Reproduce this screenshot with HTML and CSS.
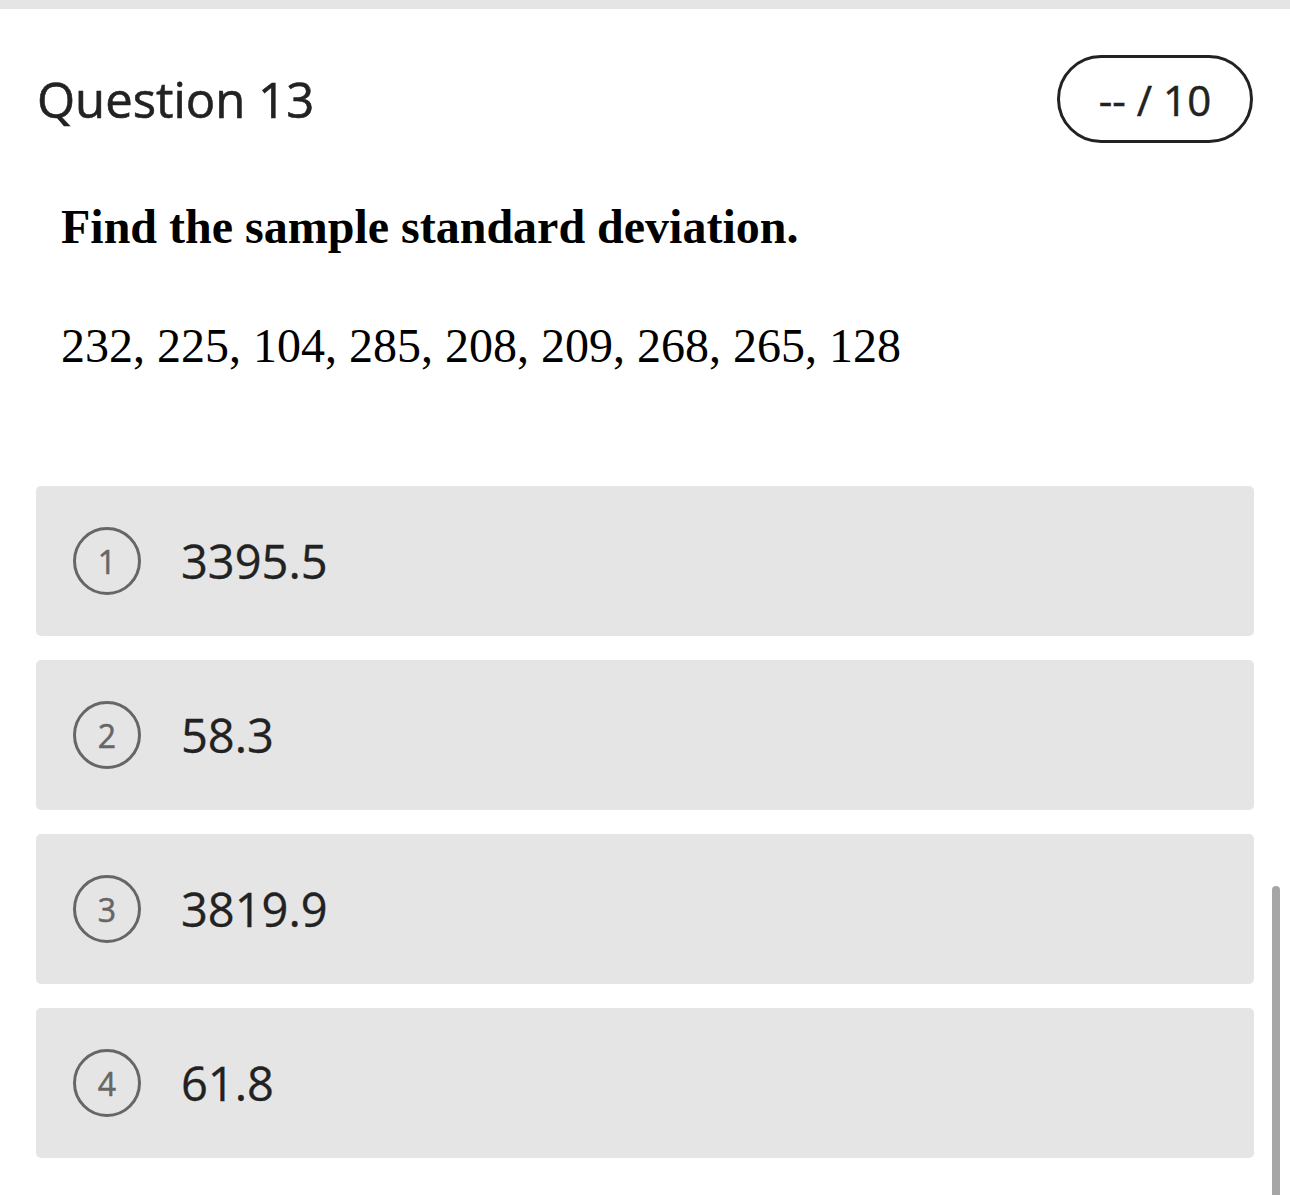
FILE: index.html
```html
<!DOCTYPE html>
<html lang="en">
<head>
    <meta charset="UTF-8">
    <meta name="viewport" content="width=device-width, initial-scale=1.0">
    <title>Question 13</title>
    <link rel="stylesheet" href="styles.css">
</head>
<body>
    <div class="top-bar"></div>

    <div class="quiz-container">
        <div class="question-header">
            <h2 class="question-title">Question 13</h2>
            <div class="score-pill">-- / 10</div>
        </div>

        <div class="question-body">
            <p class="prompt">Find the sample standard deviation.</p>
            <p class="data">232, 225, 104, 285, 208, 209, 268, 265, 128</p>
        </div>

        <div class="options">
            <div class="option">
                <span class="option-num">1</span>
                <span class="option-text">3395.5</span>
            </div>
            <div class="option">
                <span class="option-num">2</span>
                <span class="option-text">58.3</span>
            </div>
            <div class="option">
                <span class="option-num">3</span>
                <span class="option-text">3819.9</span>
            </div>
            <div class="option">
                <span class="option-num">4</span>
                <span class="option-text">61.8</span>
            </div>
        </div>
    </div>

    <div class="scroll-thumb"></div>
</body>
</html>
```
FILE: styles.css
```css
body {
    font-family: 'Open Sans', sans-serif;
    background-color: #fff;
    color: #222;
    margin: 0;
    padding: 0;
    height: 1195px;
    overflow: hidden;
}

.top-bar {
    height: 9px;
    background-color: #e5e5e5;
}

.quiz-container {
    padding: 0 36px 0 36px;
}

.question-header {
    display: flex;
    justify-content: space-between;
    align-items: center;
    padding-top: 46px;
}

.question-title {
    margin: 0 0 0 1px;
    font-size: 49px;
    font-weight: 400;
    color: #222;
    -webkit-text-stroke: 0.6px #222;
}

.score-pill {
    width: 190px;
    height: 82px;
    border: 3px solid #222;
    border-radius: 44px;
    display: flex;
    justify-content: center;
    align-items: center;
    font-size: 42px;
    -webkit-text-stroke: 0.5px #222;
    margin-right: 1px;
}

.question-body {
    padding: 0 0 0 25px;
    font-family: 'Liberation Serif', serif;
    color: #000;
}

.prompt {
    margin: 56px 0 0 0;
    font-size: 48px;
    font-weight: bold;
}

.data {
    margin: 64px 0 0 0;
    font-size: 48px;
}

.options {
    display: flex;
    flex-direction: column;
    gap: 24px;
    margin-top: 113px;
}

.option {
    height: 150px;
    background-color: #e5e5e5;
    border-radius: 5px;
    display: flex;
    align-items: center;
    padding-left: 37px;
}

.option-num {
    width: 62px;
    height: 62px;
    border: 3px solid #666;
    border-radius: 50%;
    display: flex;
    justify-content: center;
    align-items: center;
    font-size: 32px;
    color: #666;
    -webkit-text-stroke: 0.5px #666;
}

.option-text {
    margin-left: 40px;
    font-size: 47px;
    color: #222;
    -webkit-text-stroke: 0.3px #222;
}

.scroll-thumb {
    position: absolute;
    left: 1272px;
    top: 886px;
    width: 8px;
    height: 320px;
    background-color: #a6a6a6;
    border-radius: 4px;
}
```
